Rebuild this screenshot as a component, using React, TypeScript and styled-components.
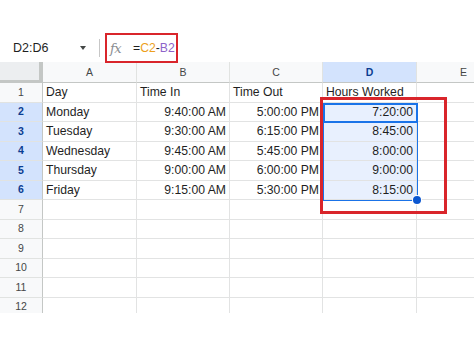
import React from 'react';
import styled, { createGlobalStyle } from 'styled-components';

const Global = createGlobalStyle`
  html, body { margin: 0; padding: 0; background: #ffffff; }
  body { font-family: "Liberation Sans", Arial, sans-serif; }
`;

const Page = styled.div`
  width: 474px;
  height: 338px;
  overflow: hidden;
  background: #ffffff;
  display: flex;
  flex-direction: column;
`;

const TopGap = styled.div`
  height: 33px;
  flex: none;
`;

const FormulaBar = styled.div`
  height: 29px;
  flex: none;
  display: flex;
  align-items: center;
`;

const NameBox = styled.div`
  width: 92px;
  box-sizing: border-box;
  padding: 0 6px 0 13px;
  display: flex;
  align-items: center;
  justify-content: space-between;
  font-size: 12.5px;
  color: #1f1f1f;
`;

const Caret = styled.span`
  width: 0;
  height: 0;
  border-left: 3.5px solid transparent;
  border-right: 3.5px solid transparent;
  border-top: 4px solid #444746;
`;

const Divider = styled.div`
  width: 1px;
  height: 18px;
  background: #c7c7c7;
  margin: 0 5px 0 7px;
`;

const FormulaFrame = styled.div`
  position: relative;
  z-index: 2;
  align-self: flex-start;
  width: 73px;
  height: 30px;
  box-sizing: border-box;
  border: 2px solid #d9252b;
  display: flex;
  align-items: center;
  padding-left: 3px;
  gap: 9px;
`;

const Fx = styled.span`
  font-family: "DejaVu Serif", "Liberation Serif", serif;
  font-style: italic;
  font-size: 13px;
  color: #8a8d91;
  letter-spacing: -0.5px;
  width: 14px;
`;

const Formula = styled.span`
  font-size: 12.2px;
  color: #1f1f1f;
  white-space: nowrap;
`;

const Ref = styled.span<{ $c: string }>`
  color: ${(p) => p.$c};
`;

const GridWrap = styled.div`
  position: relative;
  height: 251px;
  overflow: hidden;
  flex: none;
`;

const Grid = styled.div`
  display: grid;
  grid-template-columns: 43px 94px 93px 93px 94px 94px;
  grid-template-rows: 21px repeat(12, 19.5px);
  width: 511px;
`;

const Corner = styled.div`
  background: #eceef0;
  border-right: 4px solid #c4c7c5;
  border-bottom: 3px solid #c4c7c5;
  box-sizing: border-box;
`;

const ColHead = styled.div<{ $sel?: boolean }>`
  box-sizing: border-box;
  background: ${(p) => (p.$sel ? '#d3e3fd' : '#f8f9fa')};
  border-right: 1px solid #e1e3e1;
  border-bottom: 1px solid #c4c7c5;
  display: flex;
  align-items: center;
  justify-content: center;
  font-size: 10.5px;
  font-weight: ${(p) => (p.$sel ? 700 : 400)};
  color: ${(p) => (p.$sel ? '#0b3d91' : '#444746')};
`;

const RowHead = styled.div<{ $sel?: boolean }>`
  box-sizing: border-box;
  background: ${(p) => (p.$sel ? '#d3e3fd' : '#f8f9fa')};
  border-right: 1px solid #c4c7c5;
  border-bottom: 1px solid #e1e3e1;
  display: flex;
  align-items: center;
  justify-content: center;
  padding-bottom: 1px;
  font-size: 10.5px;
  font-weight: ${(p) => (p.$sel ? 700 : 400)};
  color: ${(p) => (p.$sel ? '#0b3d91' : '#444746')};
`;

const Cell = styled.div<{ $right?: boolean; $sel?: boolean }>`
  box-sizing: border-box;
  background: ${(p) => (p.$sel ? '#e8f0fe' : '#ffffff')};
  border-right: 1px solid #e2e3e3;
  border-bottom: 1px solid #e2e3e3;
  display: flex;
  align-items: center;
  justify-content: ${(p) => (p.$right ? 'flex-end' : 'flex-start')};
  padding: 0 3px;
  font-size: 12.2px;
  color: #1f1f1f;
  white-space: nowrap;
`;

const SelRange = styled.div`
  position: absolute;
  left: 323px;
  top: 40.5px;
  width: 95px;
  height: 98px;
  box-sizing: border-box;
  border: 1px solid #1a73e8;
  pointer-events: none;
`;

const ActiveCell = styled.div`
  position: absolute;
  left: 323px;
  top: 40.5px;
  width: 95px;
  height: 20px;
  box-sizing: border-box;
  border: 2px solid #1a73e8;
  pointer-events: none;
`;

const FillHandle = styled.div`
  position: absolute;
  left: 413px;
  top: 134px;
  width: 8px;
  height: 8px;
  border-radius: 50%;
  background: #0b57d0;
  box-shadow: 0 0 0 1px #ffffff;
`;

const RedFrame = styled.div`
  position: absolute;
  left: 320px;
  top: 35px;
  width: 127px;
  height: 117px;
  box-sizing: border-box;
  border: 3px solid #d9252b;
  pointer-events: none;
`;

const cols = ['A', 'B', 'C', 'D', 'E'];

type Row = [string, string, string, string];
const data: Row[] = [
  ['Day', 'Time In', 'Time Out', 'Hours Worked'],
  ['Monday', '9:40:00 AM', '5:00:00 PM', '7:20:00'],
  ['Tuesday', '9:30:00 AM', '6:15:00 PM', '8:45:00'],
  ['Wednesday', '9:45:00 AM', '5:45:00 PM', '8:00:00'],
  ['Thursday', '9:00:00 AM', '6:00:00 PM', '9:00:00'],
  ['Friday', '9:15:00 AM', '5:30:00 PM', '8:15:00'],
];

export default function App() {
  const rows = Array.from({ length: 12 }, (_, i) => i + 1);
  return (
    <Page>
      <Global />
      <TopGap />
      <FormulaBar>
        <NameBox>
          <span>D2:D6</span>
          <Caret />
        </NameBox>
        <Divider />
        <FormulaFrame>
          <Fx>fx</Fx>
          <Formula>
            =<Ref $c="#ed9f1c">C2</Ref>-<Ref $c="#8e63c9">B2</Ref>
          </Formula>
        </FormulaFrame>
      </FormulaBar>
      <GridWrap>
        <Grid>
          <Corner />
          {cols.map((c) => (
            <ColHead key={c} $sel={c === 'D'}>
              {c}
            </ColHead>
          ))}
          {rows.map((r) => {
            const d = data[r - 1];
            const sel = r >= 2 && r <= 6;
            return (
              <React.Fragment key={r}>
                <RowHead $sel={sel}>{r}</RowHead>
                <Cell>{d ? d[0] : ''}</Cell>
                <Cell $right={r > 1}>{d ? d[1] : ''}</Cell>
                <Cell $right={r > 1}>{d ? d[2] : ''}</Cell>
                <Cell $right={r > 1} $sel={sel}>
                  {d ? d[3] : ''}
                </Cell>
                <Cell />
              </React.Fragment>
            );
          })}
        </Grid>
        <SelRange />
        <ActiveCell />
        <FillHandle />
        <RedFrame />
      </GridWrap>
    </Page>
  );
}
